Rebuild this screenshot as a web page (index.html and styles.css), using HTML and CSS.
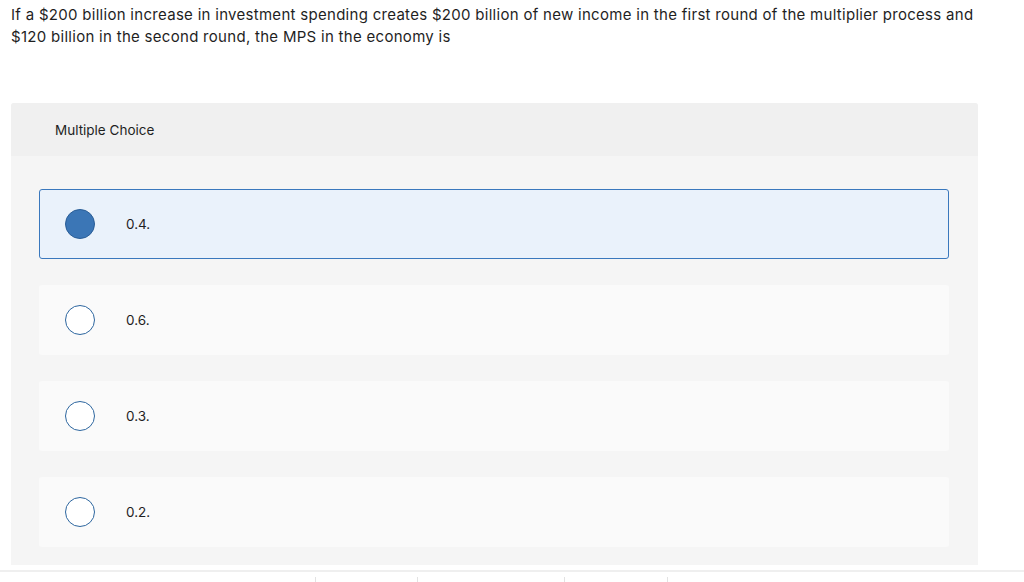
FILE: index.html
```html
<!DOCTYPE html>
<html>
<head>
<meta charset="utf-8">
<link rel="stylesheet" href="styles.css">
</head>
<body>
<div class="page">
  <p class="question">If a $200 billion increase in investment spending creates $200 billion of new income in the first round of the multiplier process and $120 billion in the second round, the MPS in the economy is</p>
  <section class="panel">
    <header class="panel-head">Multiple Choice</header>
    <div class="choices">
      <div class="choice selected"><span class="radio"></span><span class="label">0.4.</span></div>
      <div class="choice"><span class="radio"></span><span class="label">0.6.</span></div>
      <div class="choice"><span class="radio"></span><span class="label">0.3.</span></div>
      <div class="choice"><span class="radio"></span><span class="label">0.2.</span></div>
    </div>
  </section>
  <footer class="footer">
    <span class="tick t1"></span><span class="tick t2"></span><span class="tick t3"></span><span class="tick t4"></span>
  </footer>
</div>
</body>
</html>
```

FILE: styles.css
```css
html, body {
  margin: 0;
  padding: 0;
  background: #ffffff;
}
.page {
  font-family: "Inter", "Liberation Sans", sans-serif;
  color: #1f1f1f;
  width: 1024px;
  height: 582px;
  overflow: hidden;
}
.question {
  margin: 0;
  padding: 4px 30px 0 11px;
  font-size: 15px;
  line-height: 22px;
  letter-spacing: 0.29px;
}
.panel {
  margin: 55px 0 0 11px;
  width: 967px;
  background: #f5f5f5;
  border-radius: 3px 3px 0 0;
}
.panel-head {
  height: 53px;
  background: #f0f0f0;
  border-radius: 3px 3px 0 0;
  padding-left: 44px;
  display: flex;
  align-items: center;
  font-size: 13.5px;
  color: #1f1f1f;
}
.choices {
  display: flex;
  flex-direction: column;
  gap: 26px;
  padding: 33px 29px 18px 28px;
}
.choice {
  height: 70px;
  box-sizing: border-box;
  background: #fafafa;
  border: 1px solid transparent;
  border-radius: 3px;
  display: flex;
  align-items: center;
  padding-left: 25px;
}
.choice.selected {
  background: #eaf2fb;
  border-color: #3a78bd;
}
.radio {
  width: 30px;
  height: 30px;
  box-sizing: border-box;
  border-radius: 50%;
  border: 1.3px solid #2d669f;
  background: #ffffff;
  flex: none;
}
.selected .radio {
  background: #3b76b6;
  border-color: #2a5e97;
}
.label {
  margin-left: 31px;
  font-size: 13.5px;
  color: #1f1f1f;
}
.footer {
  margin-top: 5px;
  border-top: 2px solid #efefef;
  height: 12px;
  position: relative;
}
.tick {
  position: absolute;
  top: 5px;
  width: 1px;
  height: 8px;
  background: #e2e2e2;
}
.t1 { left: 315px; }
.t2 { left: 417px; }
.t3 { left: 564px; }
.t4 { left: 667px; }
```
